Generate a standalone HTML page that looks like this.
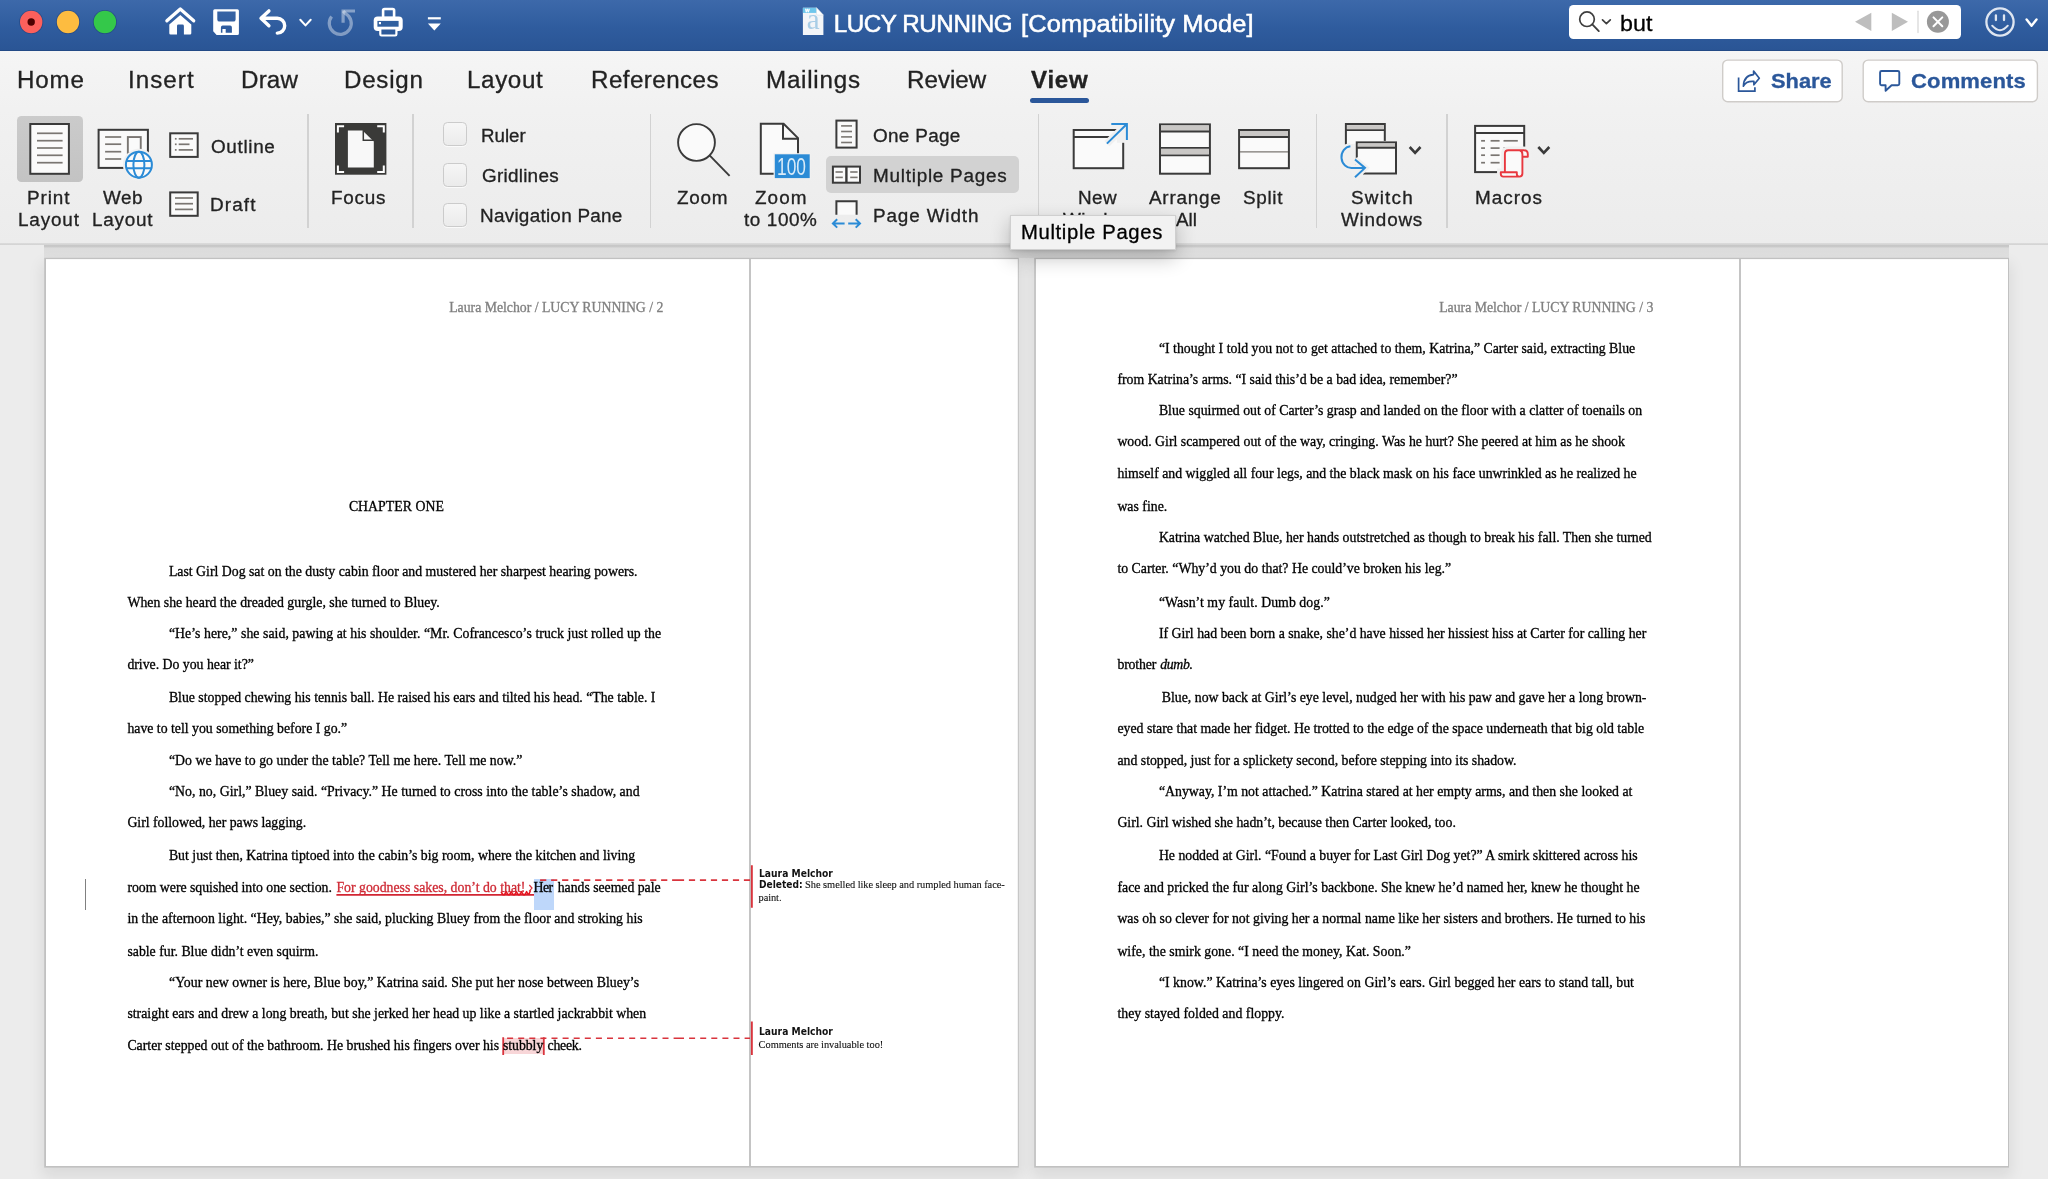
<!DOCTYPE html>
<html lang="en"><head><meta charset="utf-8"><title>LUCY RUNNING [Compatibility Mode]</title>
<style>
html,body{margin:0;padding:0;}
body{width:2048px;height:1179px;overflow:hidden;position:relative;background:#ececec;font-family:"Liberation Sans",sans-serif;}
.abs,.t{position:absolute;}
.t{white-space:nowrap;transform-origin:0 50%;font-family:"Liberation Sans",sans-serif;z-index:4;}
.t.s{font-family:"Liberation Serif",serif;}
.t.d{font-family:"DejaVu Sans","Liberation Sans",sans-serif;}
#titlebar{left:0;top:0;width:2048px;height:51px;background:linear-gradient(#3d69aa,#2f5c9e 55%,#2a5595);border-bottom:1px solid #234a86;box-sizing:border-box;}
#ribbon{left:0;top:51px;width:2048px;height:192px;background:linear-gradient(#f5f5f5,#f1f1f1 30%,#ececec);}
#rline{left:0;top:243px;width:2048px;height:2px;background:linear-gradient(#dcdcdc,#d2d2d2);}
#docshade{left:44px;top:245px;width:1965px;height:13px;background:linear-gradient(#c6c6c6,#c9c9c9 1.8px,#dbdbdb 3px,#e1e1e1);}
.page{background:#fff;box-shadow:0 7px 14px 3px rgba(0,0,0,.08);}
#search{left:1569px;top:5px;width:392px;height:33.500px;background:#fff;border-radius:4.500px;}
.btn{background:#fff;border:1.3px solid #cfcdca;border-radius:6px;box-sizing:border-box;top:59.4px;height:43px;}
.sep{width:1.3px;background:#d2d2d2;top:114.2px;height:113.5px;}
.cb{width:24px;height:24px;left:442.5px;border:1px solid #cbcbcb;border-radius:4.500px;box-sizing:border-box;background:linear-gradient(#f6f6f6,#ebebeb);box-shadow:0 1px 0 rgba(255,255,255,.7);}
#tip{left:1010px;top:214.6px;width:166px;height:35px;background:#f2f2f2;border:1px solid #cfcfcf;box-sizing:border-box;box-shadow:0 8px 20px rgba(0,0,0,.24),0 1px 3px rgba(0,0,0,.10);z-index:20;}
svg{position:absolute;left:0;top:0;}
.t.s{-webkit-text-stroke:0.3px currentColor;}
.t{-webkit-text-stroke:0.3px currentColor;}

</style></head>
<body>
<div class="abs" id="titlebar"></div>
<div class="abs" id="ribbon"></div>
<div class="abs" id="rline"></div>
<div class="abs" id="docshade"></div>
<div class="abs page" style="left:45px;top:259px;width:973px;height:908px;"></div>
<div class="abs page" style="left:1035px;top:259px;width:973px;height:908px;"></div>
<svg width="2048" height="1179" viewBox="0 0 2048 1179">
<rect x="44.2" y="257.8" width="974.6" height="909.8" fill="#c1c1c1"/>
<rect x="46" y="259.1" width="971.8" height="906.9" fill="#fff"/>
<rect x="1034.2" y="257.8" width="974.8" height="909.8" fill="#c1c1c1"/>
<rect x="1035.9" y="259.1" width="972.1" height="906.9" fill="#fff"/>
</svg>
<div class="abs" id="search"></div>
<div class="abs" style="left:16.8px;top:116.1px;width:66.1px;height:65.8px;background:linear-gradient(#cbcbcb,#c3c3c3);border-radius:4.5px;"></div>
<div class="abs" style="left:826.3px;top:156.4px;width:193px;height:36.4px;background:#d2d2d2;border-radius:5px;"></div>
<div class="abs" style="left:1030.3px;top:97.6px;width:58.7px;height:5px;background:#2b579a;border-radius:2.5px;"></div>
<div class="abs sep" style="left:307.4px;"></div>
<div class="abs sep" style="left:412.4px;"></div>
<div class="abs sep" style="left:649.7px;"></div>
<div class="abs sep" style="left:1038px;"></div>
<div class="abs sep" style="left:1316px;"></div>
<div class="abs sep" style="left:1446.4px;"></div>
<div class="abs cb" style="top:122.2px;"></div>
<div class="abs cb" style="top:162.7px;"></div>
<div class="abs cb" style="top:203.1px;"></div>
<!-- doc decorations -->
<div class="abs" style="left:749.1px;top:259px;width:1.8px;height:907px;background:#c4c4c4;"></div>
<div class="abs" style="left:1739.1px;top:259px;width:1.8px;height:907px;background:#c4c4c4;"></div>
<div class="abs" style="left:533.8px;top:879.2px;width:20.3px;height:31.1px;background:#bed7fa;"></div>
<div class="abs" style="left:503.2px;top:1037.5px;width:40.6px;height:16.9px;background:#f8d6d8;"></div>
<div class="abs" style="left:85px;top:879px;width:1px;height:31px;background:#808080;"></div>
<svg width="2048" height="1179" viewBox="0 0 2048 1179" style="z-index:3">
<g fill="none" stroke="#fff" stroke-linecap="round" stroke-linejoin="round">
 <!-- traffic lights -->
 <circle cx="31.2" cy="22" r="12" fill="#1b3870" fill-opacity=".5" stroke="none"/><circle cx="31.2" cy="22" r="11.200" fill="#fc605c" stroke="none"/>
 <circle cx="31.200" cy="22" r="3.700" fill="#4d0000" stroke="none"/>
 <circle cx="68" cy="22" r="12" fill="#1b3870" fill-opacity=".5" stroke="none"/><circle cx="68" cy="22" r="11.200" fill="#fdbc40" stroke="none"/>
 <circle cx="104.900" cy="22" r="12" fill="#1b3870" fill-opacity=".5" stroke="none"/><circle cx="104.900" cy="22" r="11.200" fill="#34c84a" stroke="none"/>
 <!-- home -->
 <path d="M166.9,20.8L180.3,8.9L193.7,20.8" stroke-width="3.3"/>
 <path d="M180.3,15L191.3,24.6V33.2Q191.3,34.5 190,34.5H183.9V26Q183.9,24.6 182.5,24.6H178.4Q177,24.6 177,26V34.5H170.6Q169.3,34.5 169.3,33.2V24.6Z" fill="#fff" stroke="none"/>
 <!-- save -->
 <path d="M214.7,9.2H237.4Q238.9,9.2 238.9,10.7V33.5Q238.9,35 237.4,35H216.6L213.2,31.3V10.7Q213.2,9.2 214.7,9.2Z M217.3,11.4V19.4Q217.3,21.6 219.5,21.6H233.4Q235.6,21.6 235.6,19.4V11.4Z M220.9,32.8V27.4Q220.9,25.6 222.7,25.6H230.1Q231.9,25.6 231.9,27.4V32.8H225.7V28.9H222.4V32.8Z" fill="#fff" fill-rule="evenodd" stroke="none"/>
 <!-- undo -->
 <path d="M268.900,10.900L261,18.300L268.900,25.800M261.300,18.300H277.300A7.400,7.400 0 0 1 277.300,33.100" stroke-width="3.400"/>
 <path d="M300.3,19.8L305.5,25.4L310.7,19.8" stroke-width="2"/>
 <!-- redo dim -->
 <g stroke="#fff" stroke-opacity=".4" stroke-width="3.2" stroke-linecap="butt" stroke-linejoin="miter">
  <path d="M331.6,16.600A11,11 0 1 0 345.600,13.700L343.100,11"/>
  <path d="M343.1,22.8V11H355"/>
 </g>
 <!-- print -->
 <rect x="383.1" y="9" width="11" height="9" rx="1.5" stroke-width="2.6"/>
 <rect x="373.7" y="16.5" width="29" height="14.6" rx="4" fill="#fff" stroke="none"/>
 <rect x="377.4" y="20.9" width="21.2" height="5.8" fill="#31609f" stroke="none"/>
 <rect x="378.9" y="22" width="2.1" height="2.2" fill="#fff" stroke="none"/>
 <rect x="380.3" y="28.5" width="16.1" height="7" rx="1.2" fill="#2d5999" stroke-width="2.2"/>
 <!-- qat dropdown -->
 <path d="M427.9,18.3H440.8" stroke-width="2.2" stroke-linecap="butt"/>
 <path d="M427.9,23.4H440.8L434.35,30.4Z" fill="#fff" stroke="none"/>
 <!-- doc icon -->
 <path d="M802.9,7.8H816.6L823.4,15.1V34.9H802.9Z" fill="#f3f5f8" stroke="none"/>
 <path d="M802.9,7.8H816.6V12.9H802.9Z" fill="#6ec6eb" stroke="none"/>
 <path d="M816.6,7.8L823.4,15.1H817.6Q816.6,15.1 816.6,14.1Z" fill="#fff" stroke="#cfd6de" stroke-width=".5"/>
 <!-- search glyphs -->
 <circle cx="1587" cy="19.200" r="7.300" stroke="#3e3e3e" stroke-width="1.700"/>
 <path d="M1592.300,24.400L1598.800,31.100" stroke="#3e3e3e" stroke-width="1.900"/>
 <path d="M1602.500,19.900L1606.400,23.600L1610.300,19.900" stroke="#3e3e3e" stroke-width="1.700"/>
 <path d="M1871.300,12.700V31L1855,21.850Z" fill="#bebebe" stroke="none"/>
 <path d="M1891.800,12.700V31L1908,21.850Z" fill="#bebebe" stroke="none"/>
 <path d="M1918,11.200V32.500" stroke="#d9d9d9" stroke-width="1.300"/>
 <circle cx="1937.900" cy="21.800" r="11" fill="#989898" stroke="none"/>
 <path d="M1933.500,17.400L1942.300,26.200M1942.300,17.400L1933.500,26.200" stroke="#fff" stroke-width="2"/>
 <!-- smiley -->
 <circle cx="2000" cy="22" r="13.600" stroke="#dfe6f1" stroke-width="2.300"/>
 <path d="M1995.900,15.300V20M2004,15.300V20" stroke="#dfe6f1" stroke-width="2.300"/>
 <path d="M1992.200,25.700Q2000,34.700 2007.800,25.700" stroke="#dfe6f1" stroke-width="2"/>
 <path d="M2026.600,19.500L2031.550,25.700L2036.500,19.500" stroke-width="2.400"/>
 <rect x="1722.700" y="60.100" width="119.500" height="41.600" rx="5" fill="#fff" stroke="#cfccc9" stroke-width="1.400"/>
 <rect x="1863.200" y="60.100" width="174.200" height="41.600" rx="5" fill="#fff" stroke="#cfccc9" stroke-width="1.400"/>
 <!-- share icon -->
 <g stroke="#2b579a" stroke-width="1.7" stroke-linecap="butt" stroke-linejoin="miter">
  <path d="M1738.6,77.5V91.2H1754.9V87.2"/>
  <path d="M1753.6,71L1759.3,78.2L1753.9,84.8V81.4C1748.5,81 1745,82.8 1743.4,86.2C1743.6,79.5 1747,75 1753.6,74.6Z" stroke-linejoin="round"/>
  <path d="M1881.6,71H1897.8Q1899.3,71 1899.3,72.5V83.8Q1899.3,85.3 1897.8,85.3H1891.6L1885.6,90.8V85.3H1881.6Q1880.1,85.3 1880.1,83.8V72.5Q1880.1,71 1881.6,71Z" stroke-width="1.9" stroke-linejoin="round"/>
 </g>
</g>

<g fill="none" stroke="#3a3a3a" stroke-width="2">
 <!-- print layout -->
 <rect x="30.300" y="124" width="38.600" height="49.800" fill="#fafafa"/>
 <path d="M37,133.3H62.6" stroke="#7a7672" stroke-width="1.7"/><path d="M37,140.7H62.6" stroke="#7a7672" stroke-width="1.7"/><path d="M37,148H62.6" stroke="#7a7672" stroke-width="1.7"/><path d="M37,155.3H62.6" stroke="#7a7672" stroke-width="1.7"/><path d="M37,162.7H62.6" stroke="#7a7672" stroke-width="1.7"/>
 <!-- web layout -->
 <rect x="98.600" y="129.800" width="49.300" height="38.100" fill="#fafafa"/>
 <path d="M105.1,137H121.2" stroke="#7a7672" stroke-width="1.7"/><path d="M105.1,144.2H121.2" stroke="#7a7672" stroke-width="1.7"/><path d="M105.1,151.7H121.2" stroke="#7a7672" stroke-width="1.7"/><path d="M105.1,159H121.2" stroke="#7a7672" stroke-width="1.7"/>
 <rect x="127.850" y="137.050" width="12.900" height="16" stroke="#7a7672" stroke-width="1.9"/>
 <circle cx="138.9" cy="164.7" r="16" fill="#f0f0f0" stroke="none"/>
 <g stroke="#2b8bd6" stroke-width="2">
  <circle cx="138.9" cy="164.7" r="13" fill="#fafafa"/>
  <ellipse cx="138.9" cy="164.7" rx="5.5" ry="13"/>
  <path d="M126.500,161H151.300M126.500,168.300H151.300"/>
 </g>
 <!-- outline -->
 <rect x="170.2" y="133.3" width="27.5" height="23.6" fill="#fafafa"/>
 <path d="M178.7,138.8H193" stroke="#7a7672" stroke-width="1.7"/><path d="M178.7,149.9H193" stroke="#7a7672" stroke-width="1.7"/><path d="M178.7,144.3H189.5" stroke="#7a7672" stroke-width="1.7"/>
 <path d="M174.9,138.8H176.6" stroke="#7a7672" stroke-width="1.7"/><path d="M174.9,144.3H176.6" stroke="#7a7672" stroke-width="1.7"/><path d="M174.9,149.9H176.6" stroke="#7a7672" stroke-width="1.7"/>
 <!-- draft -->
 <rect x="170.2" y="192.4" width="27.5" height="23.4" fill="#fafafa"/>
 <path d="M175,198H193" stroke="#7a7672" stroke-width="1.7"/><path d="M175,203.7H193" stroke="#7a7672" stroke-width="1.7"/><path d="M175,209.4H193" stroke="#7a7672" stroke-width="1.7"/>
 <!-- focus -->
 <rect x="335" y="123" width="51.4" height="51.7" fill="#3a3a38" stroke="none"/>
 <path d="M347.9,130.6H362.5L373.8,141.500V167.5H347.9Z" fill="#f8f8f8" stroke="none"/>
 <path d="M363.300,130.6V140.200H373.8" stroke="#3a3a38" stroke-width="1.500"/>
 <path d="M337.9,132.500V126.200H344.1M377.2,126.200H383.8V132.500M337.9,165.500V171.900H344.1M377.2,171.900H383.8V165.500" stroke="#fff" stroke-width="2"/>
 <!-- zoom -->
 <circle cx="696.5" cy="142.5" r="18.4" fill="#fafafa" stroke-width="1.9"/>
 <path d="M709.6,155.4L729.6,175.9" stroke-width="1.9"/>
 <!-- zoom 100 -->
 <path d="M760.8,123.7H783.6L798,138.1V173.700H760.8Z" fill="#fafafa" stroke-width="2"/>
 <path d="M783,123.7V138.7H798" stroke-width="2"/>
 <rect x="773.6" y="153.2" width="37.3" height="26" fill="#f0f0f0" stroke="none"/>
 <rect x="774.8" y="154.3" width="34.9" height="23.8" fill="#2b8bd6" stroke="none"/>
 <!-- one page -->
 <rect x="836.4" y="120.6" width="20.2" height="27" fill="#fafafa" stroke-width="2"/>
 <path d="M841.1,125.9H852" stroke="#7a7672" stroke-width="1.6"/><path d="M841.1,131.5H852" stroke="#7a7672" stroke-width="1.6"/><path d="M841.1,136.9H852" stroke="#7a7672" stroke-width="1.6"/><path d="M841.1,142.5H852" stroke="#7a7672" stroke-width="1.6"/>
 <!-- multiple pages -->
 <rect x="832.9" y="166.6" width="27.1" height="16.1" fill="#fafafa" stroke-width="2"/>
 <path d="M846.4,166.6V182.7" stroke-width="2.4"/>
 <path d="M835.5,172H842.8" stroke="#7a7672" stroke-width="1.6"/><path d="M835.5,177.4H842.8" stroke="#7a7672" stroke-width="1.6"/><path d="M850.2,172H857.6" stroke="#7a7672" stroke-width="1.6"/><path d="M850.2,177.4H857.6" stroke="#7a7672" stroke-width="1.6"/>
 <!-- page width -->
 <path d="M836.4,214.7V201.3H856.6V214.7" fill="#fafafa" stroke-width="2"/>
 <g stroke="#2b8bd6" stroke-width="2">
  <path d="M844.6,223.4H833.5M837.2,219.2L832.9,223.4L837.2,227.6"/>
  <path d="M848.2,223.4H859.4M855.7,219.2L860,223.4L855.7,227.6"/>
 </g>
 <!-- new window -->
 <rect x="1073.700" y="130" width="49.500" height="38.200" fill="#fafafa"/>
 <path d="M1073.700,137H1122"/>
 <path d="M1106.9,143.600L1127.3,123.900" stroke="#f0f0f0" stroke-width="7.500"/><rect x="1116.900" y="120" width="14" height="22.800" fill="#f0f0f0" stroke="none"/>
 <path d="M1106.9,143.600L1126.600,124.200M1111.3,123.900H1126.900V139.900" stroke="#2b8bd6" stroke-width="2"/>
 <!-- arrange all -->
 <rect x="1160" y="124.400" width="49.900" height="49.300" fill="#fafafa"/>
 <rect x="1161" y="125.400" width="47.900" height="5.400" fill="#c9c7c5" stroke="none"/>
 <rect x="1161" y="148.900" width="47.900" height="5.600" fill="#c9c7c5" stroke="none"/>
 <path d="M1160,131.500H1209.900M1160,147.900H1209.900M1160,155.400H1209.900" stroke-width="1.900"/>
 <!-- split -->
 <rect x="1239.100" y="130" width="49.800" height="38.200" fill="#fafafa"/>
 <rect x="1240.100" y="131" width="47.800" height="5.100" fill="#c9c7c5" stroke="none"/>
 <path d="M1239.100,137H1288.900" stroke-width="1.900"/>
 <path d="M1240,151.800H1288" stroke="#7a7672" stroke-width="1.300"/>
 <!-- switch windows -->
 <path d="M1345.900,144.400V124.100H1384.800V141" fill="#fafafa"/>
 <rect x="1346.900" y="125.100" width="36.900" height="4" fill="#c9c7c5" stroke="none"/>
 <path d="M1345.900,130.100H1384.800" stroke-width="1.900"/>
 <rect x="1355.300" y="140.900" width="42.200" height="34.100" fill="#f0f0f0" stroke="none"/>
 <rect x="1356.800" y="142.400" width="39.200" height="31.100" fill="#fafafa"/>
 <rect x="1357.800" y="143.400" width="37.200" height="3.500" fill="#c9c7c5" stroke="none"/>
 <path d="M1356.800,147.800H1396" stroke-width="1.900"/>
 <path d="M1350.400,146.200A10,10.900 0 0 0 1352.300,167.900H1364M1355,159.400L1365,167.900L1355,177.300" stroke="#f0f0f0" stroke-width="6.500"/>
 <path d="M1352,165H1363V177H1352Z" fill="#f0f0f0" stroke="none"/>
 <path d="M1350.400,146.200A10,10.900 0 0 0 1352.300,167.900H1364M1355,159.400L1365,167.900L1355,177.300" stroke="#2b8bd6" stroke-width="2"/>
 <path d="M1409.700,147L1415.100,152.900L1420.500,147" stroke-width="2.600"/>
 <!-- macros -->
 <rect x="1475.100" y="125.900" width="49.100" height="46.200" fill="#fafafa"/>
 <path d="M1475.100,133H1524.200"/>
 <path d="M1481.1,140.8H1485" stroke="#7a7672" stroke-width="1.7"/><path d="M1481.1,148.1H1485" stroke="#7a7672" stroke-width="1.7"/><path d="M1481.1,155.2H1485" stroke="#7a7672" stroke-width="1.7"/><path d="M1481.1,162.7H1485" stroke="#7a7672" stroke-width="1.7"/><path d="M1490.6,140.8H1499.6" stroke="#7a7672" stroke-width="1.7"/><path d="M1490.6,148.1H1499.6" stroke="#7a7672" stroke-width="1.7"/><path d="M1490.6,155.2H1499.6" stroke="#7a7672" stroke-width="1.7"/><path d="M1490.6,162.7H1499.6" stroke="#7a7672" stroke-width="1.7"/><path d="M1503.5,140.8H1517.8" stroke="#7a7672" stroke-width="1.7"/><path d="M1503.5,148.1H1517.8" stroke="#7a7672" stroke-width="1.7"/><path d="M1503.5,155.2H1517.8" stroke="#7a7672" stroke-width="1.7"/><path d="M1503.5,162.7H1517.8" stroke="#7a7672" stroke-width="1.7"/>
 <path d="M1504.900,172.200V153.800Q1504.900,150.300 1508.400,150.300H1523.800Q1527.800,150.300 1527.800,154.300V156.700H1522.400V173.600Q1522.400,176.600 1519.400,176.600H1503.300Q1500.800,176.600 1500.800,174.100V172.200Z" fill="#f0f0f0" stroke="#f0f0f0" stroke-width="7.500"/>
 <path d="M1504.900,172.200V153.800Q1504.900,150.300 1508.400,150.300H1523.800Q1527.800,150.300 1527.800,154.300V156.700H1522.400V173.600Q1522.400,176.600 1519.400,176.600H1503.300Q1500.800,176.600 1500.800,174.100V172.200H1516.800V174.100Q1516.800,176.600 1519.400,176.600M1522.400,156.700V154.300Q1522.400,150.900 1519.600,150.300" fill="#fafafa" stroke="#e8383f" stroke-width="1.900" stroke-linejoin="round"/>
 <path d="M1538.300,147L1543.800,152.900L1549.300,147" stroke-width="2.600"/>
</g>

<g fill="none" stroke="#d9343d">
 <path d="M336.4,894.950H534" stroke="#d22532" stroke-width="1.700"/>
 <path d="M501.1,891.600q2.550,6.400 5.100,0q2.550,6.400 5.100,0q2.550,6.400 5.100,0q2.550,6.400 5.100,0q2.550,6.400 5.100,0q2,5.600 3.900,-1.400" stroke="#e6141f" stroke-width="1.500" stroke-linejoin="round"/>
 <path d="M529.300,885L532,888.100L529.100,891.400" stroke-width="1.200"/>
 <path d="M540.1,880.1H678.3M677.9,880.1H750" stroke-width="1.6" stroke-dasharray="6.2 4.8"/>
 <path d="M507.1,1038.2H679M678,1038.2H750" stroke-width="1.6" stroke-dasharray="6 5.1"/>
 <path d="M751.85,865.2V907.7M751.85,1021.6V1055" stroke-width="1.9"/>
 <path d="M503.2,1037.3V1054.9M543.800,1037.3V1054.9" stroke-width="1.8"/>
</g>
</svg>
<div class="abs" id="txt" style="left:0;top:0;width:2048px;height:1179px;will-change:transform;z-index:4;">
<span class="t" style="left:833.70px;top:8px;font-size:24.2px;line-height:31px;letter-spacing:-0.436px;color:#fff;-webkit-text-stroke:0.55px;">LUCY RUNNING</span>
<span class="t" style="left:1021.15px;top:8px;font-size:24.2px;line-height:31px;letter-spacing:0.119px;transform:scaleX(1.0500);color:#fff;-webkit-text-stroke:0.55px;">[Compatibility Mode]</span>
<span class="t s" style="left:806.80px;top:0px;font-size:29px;line-height:38px;letter-spacing:-1.200px;color:#a8cde6;-webkit-text-stroke:0;">a</span>
<span class="t" style="left:805.30px;top:7px;font-size:5.5px;line-height:7px;letter-spacing:-1.500px;font-weight:700;color:#fff;">w</span>
<span class="t" style="left:1619.88px;top:8px;font-size:22.8px;line-height:30px;transform:scaleX(1.0205);color:#000;">but</span>
<span class="t" style="left:16.75px;top:65px;font-size:23px;line-height:30px;letter-spacing:0.813px;transform:scaleX(1.0500);color:#222;">Home</span>
<span class="t" style="left:127.80px;top:65px;font-size:23px;line-height:30px;letter-spacing:1.002px;transform:scaleX(1.0500);color:#222;">Insert</span>
<span class="t" style="left:241.25px;top:65px;font-size:23px;line-height:30px;letter-spacing:0.186px;transform:scaleX(1.0500);color:#222;">Draw</span>
<span class="t" style="left:343.95px;top:65px;font-size:23px;line-height:30px;letter-spacing:0.706px;transform:scaleX(1.0500);color:#222;">Design</span>
<span class="t" style="left:466.95px;top:65px;font-size:23px;line-height:30px;letter-spacing:0.610px;transform:scaleX(1.0500);color:#222;">Layout</span>
<span class="t" style="left:590.95px;top:65px;font-size:23px;line-height:30px;letter-spacing:0.431px;transform:scaleX(1.0500);color:#222;">References</span>
<span class="t" style="left:765.95px;top:65px;font-size:23px;line-height:30px;letter-spacing:0.734px;transform:scaleX(1.0500);color:#222;">Mailings</span>
<span class="t" style="left:906.95px;top:65px;font-size:23px;line-height:30px;letter-spacing:0.011px;transform:scaleX(1.0500);color:#222;">Review</span>
<span class="t" style="left:1030.90px;top:65px;font-size:23px;line-height:30px;letter-spacing:0.695px;transform:scaleX(1.0500);font-weight:700;color:#222;">View</span>
<span class="t" style="left:1770.70px;top:67px;font-size:21px;line-height:27px;transform:scaleX(1.0401);font-weight:700;color:#2b579a;">Share</span>
<span class="t" style="left:1911.40px;top:67px;font-size:21px;line-height:27px;letter-spacing:0.118px;transform:scaleX(1.0500);font-weight:700;color:#2b579a;">Comments</span>
<span class="t" style="left:27.35px;top:187px;font-size:18px;line-height:23px;letter-spacing:0.855px;transform:scaleX(1.0500);color:#222;">Print</span>
<span class="t" style="left:18.45px;top:209px;font-size:18px;line-height:23px;letter-spacing:0.801px;transform:scaleX(1.0500);color:#222;">Layout</span>
<span class="t" style="left:103.00px;top:187px;font-size:18px;line-height:23px;letter-spacing:0.472px;transform:scaleX(1.0500);color:#222;">Web</span>
<span class="t" style="left:92.25px;top:209px;font-size:18px;line-height:23px;letter-spacing:0.725px;transform:scaleX(1.0500);color:#222;">Layout</span>
<span class="t" style="left:210.80px;top:136px;font-size:18px;line-height:23px;letter-spacing:0.623px;transform:scaleX(1.0500);color:#222;">Outline</span>
<span class="t" style="left:210.05px;top:194px;font-size:18px;line-height:23px;letter-spacing:1.070px;transform:scaleX(1.0500);color:#222;">Draft</span>
<span class="t" style="left:331.45px;top:187px;font-size:18px;line-height:23px;letter-spacing:0.686px;transform:scaleX(1.0500);color:#222;">Focus</span>
<span class="t" style="left:480.66px;top:125px;font-size:18px;line-height:23px;transform:scaleX(1.0400);color:#222;">Ruler</span>
<span class="t" style="left:481.50px;top:165px;font-size:18px;line-height:23px;letter-spacing:0.241px;transform:scaleX(1.0500);color:#222;">Gridlines</span>
<span class="t" style="left:480.45px;top:205px;font-size:18px;line-height:23px;letter-spacing:0.249px;transform:scaleX(1.0500);color:#222;">Navigation Pane</span>
<span class="t" style="left:676.70px;top:187px;font-size:18px;line-height:23px;letter-spacing:0.709px;transform:scaleX(1.0500);color:#222;">Zoom</span>
<span class="t" style="left:755.30px;top:187px;font-size:18px;line-height:23px;letter-spacing:1.026px;transform:scaleX(1.0500);color:#222;">Zoom</span>
<span class="t" style="left:744.30px;top:209px;font-size:18px;line-height:23px;letter-spacing:0.564px;transform:scaleX(1.0500);color:#222;">to 100%</span>
<span class="t" style="left:777.16px;top:152px;font-size:23.3px;line-height:30px;transform:scaleX(0.7438);color:#d9ebf8;-webkit-text-stroke:0;">100</span>
<span class="t" style="left:872.90px;top:125px;font-size:18px;line-height:23px;letter-spacing:0.299px;transform:scaleX(1.0500);color:#222;">One Page</span>
<span class="t" style="left:872.85px;top:165px;font-size:18px;line-height:23px;letter-spacing:0.709px;transform:scaleX(1.0500);color:#222;">Multiple Pages</span>
<span class="t" style="left:872.85px;top:205px;font-size:18px;line-height:23px;letter-spacing:0.816px;transform:scaleX(1.0500);color:#222;">Page Width</span>
<span class="t" style="left:1077.95px;top:187px;font-size:18px;line-height:23px;letter-spacing:0.376px;transform:scaleX(1.0500);color:#222;">New</span>
<span class="t" style="left:1063.00px;top:209px;font-size:18px;line-height:23px;letter-spacing:0.424px;transform:scaleX(1.0500);color:#222;">Window</span>
<span class="t" style="left:1149.00px;top:187px;font-size:18px;line-height:23px;letter-spacing:0.726px;transform:scaleX(1.0500);color:#222;">Arrange</span>
<span class="t" style="left:1175.60px;top:209px;font-size:18px;line-height:23px;transform:scaleX(1.0471);color:#222;">All</span>
<span class="t" style="left:1242.80px;top:187px;font-size:18px;line-height:23px;letter-spacing:0.651px;transform:scaleX(1.0500);color:#222;">Split</span>
<span class="t" style="left:1350.80px;top:187px;font-size:18px;line-height:23px;letter-spacing:1.161px;transform:scaleX(1.0500);color:#222;">Switch</span>
<span class="t" style="left:1340.80px;top:209px;font-size:18px;line-height:23px;letter-spacing:0.735px;transform:scaleX(1.0500);color:#222;">Windows</span>
<span class="t" style="left:1475.35px;top:187px;font-size:18px;line-height:23px;letter-spacing:0.931px;transform:scaleX(1.0500);color:#222;">Macros</span>
<span class="t s" style="left:449.20px;top:299px;font-size:13.8px;line-height:18px;letter-spacing:-0.021px;color:#808080;">Laura Melchor / LUCY RUNNING / 2</span>
<span class="t s" style="left:1439.20px;top:299px;font-size:13.8px;line-height:18px;letter-spacing:-0.021px;color:#808080;">Laura Melchor / LUCY RUNNING / 3</span>
<span class="t s" style="left:348.90px;top:498px;font-size:13.8px;line-height:18px;letter-spacing:0.026px;color:#000;">CHAPTER ONE</span>
<span class="t s" style="left:168.90px;top:563px;font-size:13.8px;line-height:18px;color:#000;z-index:5;">Last Girl Dog sat on the dusty cabin floor and mustered her sharpest hearing powers.</span>
<span class="t s" style="left:127.40px;top:594px;font-size:13.8px;line-height:18px;letter-spacing:0.009px;color:#000;z-index:5;">When she heard the dreaded gurgle, she turned to Bluey.</span>
<span class="t s" style="left:168.90px;top:625px;font-size:13.8px;line-height:18px;letter-spacing:0.038px;color:#000;z-index:5;">“He’s here,” she said, pawing at his shoulder. “Mr. Cofrancesco’s truck just rolled up the</span>
<span class="t s" style="left:127.40px;top:656px;font-size:13.8px;line-height:18px;letter-spacing:-0.013px;color:#000;z-index:5;">drive. Do you hear it?”</span>
<span class="t s" style="left:168.90px;top:689px;font-size:13.8px;line-height:18px;letter-spacing:-0.014px;color:#000;z-index:5;">Blue stopped chewing his tennis ball. He raised his ears and tilted his head. “The table. I</span>
<span class="t s" style="left:127.40px;top:720px;font-size:13.8px;line-height:18px;letter-spacing:-0.005px;color:#000;z-index:5;">have to tell you something before I go.”</span>
<span class="t s" style="left:168.90px;top:752px;font-size:13.8px;line-height:18px;letter-spacing:0.041px;color:#000;z-index:5;">“Do we have to go under the table? Tell me here. Tell me now.”</span>
<span class="t s" style="left:168.90px;top:783px;font-size:13.8px;line-height:18px;letter-spacing:0.023px;color:#000;z-index:5;">“No, no, Girl,” Bluey said. “Privacy.” He turned to cross into the table’s shadow, and</span>
<span class="t s" style="left:127.40px;top:814px;font-size:13.8px;line-height:18px;letter-spacing:-0.018px;color:#000;z-index:5;">Girl followed, her paws lagging.</span>
<span class="t s" style="left:168.90px;top:847px;font-size:13.8px;line-height:18px;letter-spacing:0.004px;color:#000;z-index:5;">But just then, Katrina tiptoed into the cabin’s big room, where the kitchen and living</span>
<span class="t s" style="left:127.40px;top:879px;font-size:13.8px;line-height:18px;letter-spacing:-0.024px;color:#000;z-index:5;">room were squished into one section.</span>
<span class="t s" style="left:557.70px;top:879px;font-size:13.8px;line-height:18px;letter-spacing:-0.032px;color:#000;z-index:5;">hands seemed pale</span>
<span class="t s" style="left:127.40px;top:910px;font-size:13.8px;line-height:18px;letter-spacing:0.008px;color:#000;z-index:5;">in the afternoon light. “Hey, babies,” she said, plucking Bluey from the floor and stroking his</span>
<span class="t s" style="left:127.40px;top:943px;font-size:13.8px;line-height:18px;color:#000;z-index:5;">sable fur. Blue didn’t even squirm.</span>
<span class="t s" style="left:169.00px;top:974px;font-size:13.8px;line-height:18px;letter-spacing:0.037px;color:#000;z-index:5;">“Your new owner is here, Blue boy,” Katrina said. She put her nose between Bluey’s</span>
<span class="t s" style="left:127.40px;top:1005px;font-size:13.8px;line-height:18px;color:#000;z-index:5;">straight ears and drew a long breath, but she jerked her head up like a startled jackrabbit when</span>
<span class="t s" style="left:127.40px;top:1037px;font-size:13.8px;line-height:18px;color:#000;z-index:5;">Carter stepped out of the bathroom. He brushed his fingers over his</span>
<span class="t s" style="left:503.00px;top:1037px;font-size:13.8px;line-height:18px;letter-spacing:-0.055px;color:#000;z-index:5;">stubbly</span>
<span class="t s" style="left:547.50px;top:1037px;font-size:13.8px;line-height:18px;letter-spacing:-0.234px;color:#000;z-index:5;">cheek.</span>
<span class="t s" style="left:336.40px;top:879px;font-size:13.8px;line-height:18px;color:#cf2a35;z-index:5;">For goodness sakes, don’t do that!</span>
<span class="t s" style="left:533.60px;top:879px;font-size:13.8px;line-height:18px;letter-spacing:-0.544px;color:#000;z-index:5;">Her</span>
<span class="t s" style="left:1158.90px;top:340px;font-size:13.8px;line-height:18px;letter-spacing:-0.004px;color:#000;">“I thought I told you not to get attached to them, Katrina,” Carter said, extracting Blue</span>
<span class="t s" style="left:1117.40px;top:371px;font-size:13.8px;line-height:18px;color:#000;">from Katrina’s arms. “I said this’d be a bad idea, remember?”</span>
<span class="t s" style="left:1158.90px;top:402px;font-size:13.8px;line-height:18px;color:#000;">Blue squirmed out of Carter’s grasp and landed on the floor with a clatter of toenails on</span>
<span class="t s" style="left:1117.40px;top:433px;font-size:13.8px;line-height:18px;letter-spacing:0.020px;color:#000;">wood. Girl scampered out of the way, cringing. Was he hurt? She peered at him as he shook</span>
<span class="t s" style="left:1117.40px;top:465px;font-size:13.8px;line-height:18px;letter-spacing:-0.004px;color:#000;">himself and wiggled all four legs, and the black mask on his face unwrinkled as he realized he</span>
<span class="t s" style="left:1117.40px;top:498px;font-size:13.8px;line-height:18px;letter-spacing:0.006px;color:#000;">was fine.</span>
<span class="t s" style="left:1158.90px;top:529px;font-size:13.8px;line-height:18px;letter-spacing:-0.005px;color:#000;">Katrina watched Blue, her hands outstretched as though to break his fall. Then she turned</span>
<span class="t s" style="left:1117.40px;top:560px;font-size:13.8px;line-height:18px;letter-spacing:0.007px;color:#000;">to Carter. “Why’d you do that? He could’ve broken his leg.”</span>
<span class="t s" style="left:1158.90px;top:594px;font-size:13.8px;line-height:18px;letter-spacing:0.052px;color:#000;">“Wasn’t my fault. Dumb dog.”</span>
<span class="t s" style="left:1158.90px;top:625px;font-size:13.8px;line-height:18px;letter-spacing:-0.008px;color:#000;">If Girl had been born a snake, she’d have hissed her hissiest hiss at Carter for calling her</span>
<span class="t s" style="left:1117.40px;top:656px;font-size:13.8px;line-height:18px;letter-spacing:-0.141px;color:#000;">brother</span>
<span class="t s" style="left:1161.80px;top:689px;font-size:13.8px;line-height:18px;color:#000;">Blue, now back at Girl’s eye level, nudged her with his paw and gave her a long brown-</span>
<span class="t s" style="left:1117.40px;top:720px;font-size:13.8px;line-height:18px;color:#000;">eyed stare that made her fidget. He trotted to the edge of the space underneath that big old table</span>
<span class="t s" style="left:1117.40px;top:752px;font-size:13.8px;line-height:18px;color:#000;">and stopped, just for a splickety second, before stepping into its shadow.</span>
<span class="t s" style="left:1158.90px;top:783px;font-size:13.8px;line-height:18px;letter-spacing:0.006px;color:#000;">“Anyway, I’m not attached.” Katrina stared at her empty arms, and then she looked at</span>
<span class="t s" style="left:1117.40px;top:814px;font-size:13.8px;line-height:18px;letter-spacing:-0.006px;color:#000;">Girl. Girl wished she hadn’t, because then Carter looked, too.</span>
<span class="t s" style="left:1158.90px;top:847px;font-size:13.8px;line-height:18px;letter-spacing:-0.007px;color:#000;">He nodded at Girl. “Found a buyer for Last Girl Dog yet?” A smirk skittered across his</span>
<span class="t s" style="left:1117.40px;top:879px;font-size:13.8px;line-height:18px;letter-spacing:0.010px;color:#000;">face and pricked the fur along Girl’s backbone. She knew he’d named her, knew he thought he</span>
<span class="t s" style="left:1117.40px;top:910px;font-size:13.8px;line-height:18px;color:#000;">was oh so clever for not giving her a normal name like her sisters and brothers. He turned to his</span>
<span class="t s" style="left:1117.40px;top:943px;font-size:13.8px;line-height:18px;letter-spacing:0.018px;color:#000;">wife, the smirk gone. “I need the money, Kat. Soon.”</span>
<span class="t s" style="left:1158.90px;top:974px;font-size:13.8px;line-height:18px;letter-spacing:0.018px;color:#000;">“I know.” Katrina’s eyes lingered on Girl’s ears. Girl begged her ears to stand tall, but</span>
<span class="t s" style="left:1117.40px;top:1005px;font-size:13.8px;line-height:18px;letter-spacing:0.018px;color:#000;">they stayed folded and floppy.</span>
<span class="t s" style="left:1160.30px;top:656px;font-size:13.8px;line-height:18px;letter-spacing:-0.365px;color:#000;font-style:italic;">dumb.</span>
<span class="t d" style="left:758.90px;top:867px;font-size:9.9px;line-height:13px;transform:scaleX(0.9304);font-weight:700;color:#111;-webkit-text-stroke:0;">Laura Melchor</span>
<span class="t d" style="left:759.20px;top:878px;font-size:10.3px;line-height:13px;transform:scaleX(0.8837);font-weight:700;color:#111;-webkit-text-stroke:0;">Deleted:</span>
<span class="t s" style="left:805.10px;top:878px;font-size:10.4px;line-height:14px;letter-spacing:-0.045px;color:#111;-webkit-text-stroke:0.1px;">She smelled like sleep and rumpled human face-</span>
<span class="t s" style="left:758.60px;top:891px;font-size:10.4px;line-height:14px;letter-spacing:-0.095px;color:#111;-webkit-text-stroke:0.1px;">paint.</span>
<span class="t d" style="left:758.90px;top:1025px;font-size:9.9px;line-height:13px;transform:scaleX(0.9304);font-weight:700;color:#111;-webkit-text-stroke:0;">Laura Melchor</span>
<span class="t s" style="left:758.60px;top:1038px;font-size:10.4px;line-height:14px;letter-spacing:-0.032px;color:#111;-webkit-text-stroke:0.1px;">Comments are invaluable too!</span>
</div>
<div class="abs" id="tip"></div>
<div class="abs" id="txt2" style="left:0;top:0;width:2048px;height:1179px;will-change:transform;z-index:25;">
<span class="t" style="left:1020.95px;top:220px;font-size:19.3px;line-height:25px;letter-spacing:0.625px;transform:scaleX(1.0500);color:#000;z-index:30;">Multiple Pages</span>
</div>


</body></html>
